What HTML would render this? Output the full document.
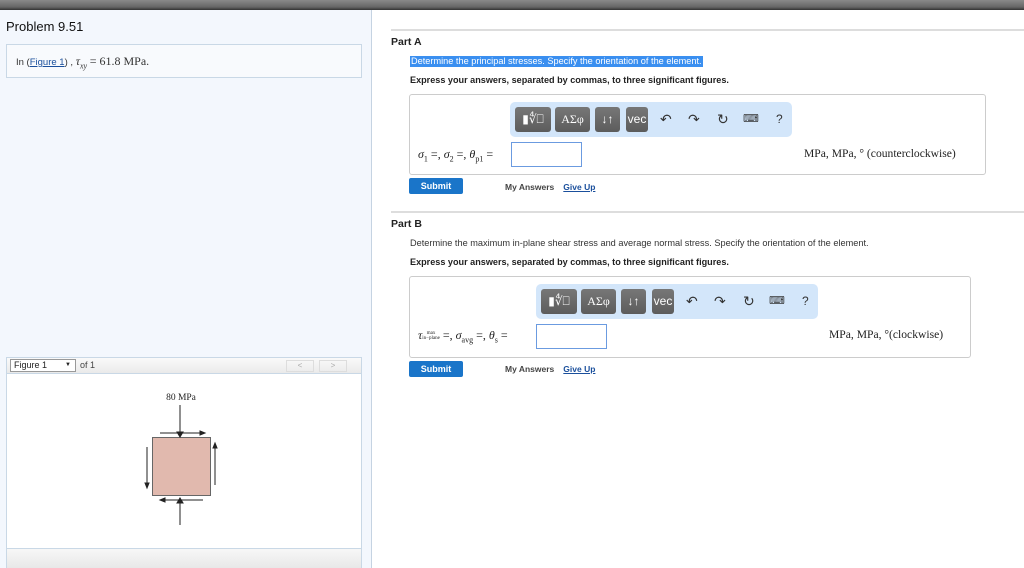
<!DOCTYPE html><html><head><style>
*{margin:0;padding:0;box-sizing:border-box}
body{width:1024px;height:568px;overflow:hidden;background:#fff;font-family:"Liberation Sans",sans-serif;position:relative;color:#222}
.a{position:absolute}
.ser{font-family:"Liberation Serif",serif}
.tb{position:absolute;height:35px;width:282px;background:#d3e6fa;border-radius:5px}
.btn{position:absolute;top:5px;height:25px;background:linear-gradient(#777,#5c5c5c);border-radius:3px;color:#fff;font-size:12px;text-align:center;line-height:25px}
.ic{position:absolute;top:8px;font-size:14px;color:#333;line-height:18px}
.sub{position:absolute;width:54px;height:16px;background:#1a75c9;color:#fff;font-weight:bold;font-size:9px;text-align:center;line-height:16px;border-radius:2px}
.ma{position:absolute;font-size:8.5px;color:#444;font-weight:bold}
.ma u{color:#1a4f9c;margin-left:9px}
.inp{position:absolute;width:71px;height:25px;border:1px solid #6b9be0;background:#fff}
.box{position:absolute;border:1px solid #ccc;border-radius:3px}
</style></head><body>
<div class="a" style="left:0;top:0;width:1024px;height:10px;background:linear-gradient(#8a8a8a,#666 70%,#333)"></div>
<div class="a" style="left:0;top:10px;width:372px;height:558px;background:#f3f7fd;border-right:1px solid #c5d3e2"></div>
<div class="a" style="left:6px;top:19px;font-size:13px;color:#111">Problem 9.51</div>
<div class="a" style="left:6px;top:44px;width:356px;height:34px;border:1px solid #c9d8e6;background:#f8fafd"></div>
<div class="a" style="left:16px;top:54px;font-size:9.5px;color:#333">In (<u style="color:#1a4f9c">Figure 1</u>) , <i class="ser" style="font-size:12px">τ<sub style="font-size:8px">xy</sub></i> <span class="ser" style="font-size:12px">= 61.8 MPa.</span></div>

<div class="a" style="left:6px;top:357px;width:356px;height:211px;border:1px solid #c9d8e6;background:#fff"></div>
<div class="a" style="left:7px;top:358px;width:354px;height:16px;background:linear-gradient(#fafafa,#eaeaea);border-bottom:1px solid #c9d8e6"></div>
<div class="a" style="left:10px;top:359px;width:66px;height:13px;border:1px solid #999;background:#fff;font-size:9px;line-height:11px;padding-left:3px">Figure 1<span style="position:absolute;right:4px;font-size:6px">▼</span></div>
<div class="a" style="left:80px;top:360px;font-size:9px;color:#444">of 1</div>
<div class="a" style="left:286px;top:360px;width:28px;height:12px;border:1px solid #ddd;font-size:8px;color:#aaa;text-align:center;line-height:10px">&lt;</div>
<div class="a" style="left:319px;top:360px;width:28px;height:12px;border:1px solid #ddd;font-size:8px;color:#aaa;text-align:center;line-height:10px">&gt;</div>
<div class="a" style="left:7px;top:548px;width:354px;height:20px;background:linear-gradient(#f7f7f7,#e8e8e8);border-top:1px solid #c9d8e6"></div>
<svg class="a" style="left:130px;top:385px" width="100" height="140">
<text x="51" y="15" font-family="Liberation Serif" font-size="9.5" text-anchor="middle" fill="#222">80 MPa</text>
<rect x="22.5" y="52.5" width="58" height="58" fill="#e1b9ae" stroke="#666" stroke-width="1"/>
<g stroke="#222" stroke-width="1" fill="#222">
<line x1="50" y1="20" x2="50" y2="50"/><path d="M47,47 L50,52 L53,47Z"/>
<line x1="30" y1="48" x2="72" y2="48"/><path d="M70,46 L75,48 L70,50Z"/>
<line x1="50" y1="115" x2="50" y2="145"/><path d="M47,118 L50,113 L53,118Z"/>
<line x1="33" y1="115" x2="73" y2="115"/><path d="M35,113 L30,115 L35,117Z"/>
<line x1="17" y1="62" x2="17" y2="100"/><path d="M15,98 L17,103 L19,98Z"/>
<line x1="85" y1="62" x2="85" y2="100"/><path d="M83,63 L85,58 L87,63Z"/>
</g></svg>

<div class="a" style="left:391px;top:29px;width:633px;height:2px;background:#ddd"></div>
<div class="a" style="left:391px;top:36px;font-size:10.5px;font-weight:bold;color:#222">Part A</div>
<div class="a" style="left:410px;top:56px;font-size:9.2px;background:#3a8ff0;color:#fff;line-height:11px;padding:0 1px">Determine the principal stresses. Specify the orientation of the element.</div>
<div class="a" style="left:410px;top:75px;font-size:9.1px;font-weight:bold;color:#222">Express your answers, separated by commas, to three significant figures.</div>
<div class="box" style="left:409px;top:94px;width:577px;height:81px"></div>
<div class="tb" style="left:510px;top:102px">
<div class="btn" style="left:5px;width:36px">▮∜⎕</div>
<div class="btn ser" style="left:45px;width:35px">ΑΣφ</div>
<div class="btn" style="left:85px;width:25px">↓↑</div>
<div class="btn" style="left:116px;width:22px">vec</div>
<div class="ic" style="left:150px">↶</div><div class="ic" style="left:178px">↷</div><div class="ic" style="left:207px">↻</div><div class="ic" style="left:233px;font-size:11px">⌨</div><div class="ic" style="left:266px;font-size:12px">?</div>
</div>
<div class="a ser" style="left:418px;top:147px;font-size:12px"><i>σ</i><sub style="font-size:8px">1</sub> =, <i>σ</i><sub style="font-size:8px">2</sub> =, <i>θ</i><sub style="font-size:8px">p1</sub> =</div>
<div class="inp" style="left:511px;top:142px"></div>
<div class="a ser" style="left:804px;top:147px;font-size:11.6px">MPa, MPa, ° (counterclockwise)</div>
<div class="sub" style="left:409px;top:178px">Submit</div>
<div class="ma" style="left:505px;top:182px">My Answers<u>Give Up</u></div>

<div class="a" style="left:391px;top:211px;width:633px;height:2px;background:#ddd"></div>
<div class="a" style="left:391px;top:218px;font-size:10.5px;font-weight:bold;color:#222">Part B</div>
<div class="a" style="left:410px;top:238px;font-size:9.2px;color:#333">Determine the maximum in-plane shear stress and average normal stress. Specify the orientation of the element.</div>
<div class="a" style="left:410px;top:257px;font-size:9.1px;font-weight:bold;color:#222">Express your answers, separated by commas, to three significant figures.</div>
<div class="box" style="left:409px;top:276px;width:562px;height:82px"></div>
<div class="tb" style="left:536px;top:284px">
<div class="btn" style="left:5px;width:36px">▮∜⎕</div>
<div class="btn ser" style="left:45px;width:35px">ΑΣφ</div>
<div class="btn" style="left:85px;width:25px">↓↑</div>
<div class="btn" style="left:116px;width:22px">vec</div>
<div class="ic" style="left:150px">↶</div><div class="ic" style="left:178px">↷</div><div class="ic" style="left:207px">↻</div><div class="ic" style="left:233px;font-size:11px">⌨</div><div class="ic" style="left:266px;font-size:12px">?</div>
</div>
<div class="a ser" style="left:418px;top:328px;font-size:12px"><i>τ</i><span style="font-size:5px;display:inline-block;line-height:5px;vertical-align:middle;text-align:center">max<br>in−plane</span> =, <i>σ</i><sub style="font-size:8px">avg</sub> =, <i>θ</i><sub style="font-size:8px">s</sub> =</div>
<div class="inp" style="left:536px;top:324px"></div>
<div class="a ser" style="left:829px;top:328px;font-size:11.6px">MPa, MPa, °(clockwise)</div>
<div class="sub" style="left:409px;top:361px">Submit</div>
<div class="ma" style="left:505px;top:364px">My Answers<u>Give Up</u></div>
</body></html>
